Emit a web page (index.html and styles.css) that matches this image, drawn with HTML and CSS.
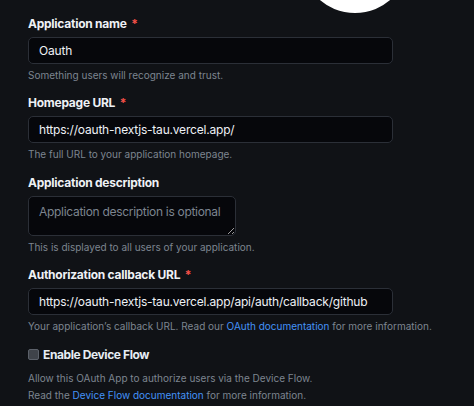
FILE: index.html
```html
<!DOCTYPE html>
<html lang="en">
<head>
<meta charset="utf-8">
<title>Register a new OAuth app</title>
<link rel="stylesheet" href="styles.css">
</head>
<body>
<div class="logo-preview"></div>
<form class="form">
  <div class="field">
    <label class="label" for="name">Application name <span class="req">*</span></label>
    <input class="input input-wide" id="name" type="text" value="Oauth">
    <p class="note">Something users will recognize and trust.</p>
  </div>
  <div class="field">
    <label class="label" for="home">Homepage URL <span class="req">*</span></label>
    <input class="input input-wide" id="home" type="text" value="https://oauth-nextjs-tau.vercel.app/">
    <p class="note">The full URL to your application homepage.</p>
  </div>
  <div class="field">
    <label class="label" for="desc">Application description</label>
    <textarea class="input textarea" id="desc" placeholder="Application description is optional"></textarea>
    <p class="note">This is displayed to all users of your application.</p>
  </div>
  <div class="field">
    <label class="label" for="cb">Authorization callback URL <span class="req">*</span></label>
    <input class="input input-wide" id="cb" type="text" value="https://oauth-nextjs-tau.vercel.app/api/auth/callback/github">
    <p class="note">Your application’s callback URL. Read our <a class="link" href="#">OAuth documentation</a> for more information.</p>
  </div>
  <div class="check-field">
    <label class="check-label"><span class="checkbox"></span>Enable Device Flow</label>
    <p class="note note-first">Allow this OAuth App to authorize users via the Device Flow.</p>
    <p class="note note-second">Read the <a class="link" href="#">Device Flow documentation</a> for more information.</p>
  </div>
</form>
</body>
</html>
```
FILE: styles.css
```css
html, body {
  margin: 0;
  padding: 0;
  background: #101216;
  height: 100%;
  overflow: hidden;
}
body {
  position: relative;
  font-family: Inter, "Noto Sans", "Liberation Sans", sans-serif;
  color: #e6edf3;
}
.logo-preview {
  position: absolute;
  left: 301px;
  top: -95px;
  width: 108px;
  height: 108px;
  border-radius: 50%;
  background: #ffffff;
}
.form {
  padding: 15.5px 0 0 28px;
  margin: 0;
}
.field {
  margin-bottom: 13.5px;
}
.label {
  display: block;
  font-size: 12px;
  line-height: 16px;
  font-weight: 700;
  letter-spacing: -0.25px;
  margin-bottom: 5px;
  color: #eef1f5;
}
.req {
  color: #f85149;
  margin-left: 2px;
}
.input {
  display: block;
  box-sizing: border-box;
  height: 27px;
  margin: 0;
  padding: 0 10px;
  border: 1px solid #2b2f37;
  border-radius: 5px;
  background: #06070b;
  color: #eef1f5;
  font-family: inherit;
  font-size: 12px;
  letter-spacing: -0.2px;
  outline: none;
}
.input-wide {
  width: 365px;
}
.textarea {
  width: 208px;
  height: 40px;
  padding: 7px 4px 7px 10px;
  line-height: 16px;
  letter-spacing: -0.3px;
  resize: vertical;
}
.textarea::placeholder {
  color: #7d8590;
}
.note {
  margin: 4px 0 0;
  font-size: 10px;
  line-height: 14px;
  color: #7d8590;
}
.link {
  color: #4493f8;
  text-decoration: none;
}
.check-label {
  display: flex;
  align-items: center;
  gap: 4px;
  font-size: 12px;
  line-height: 16px;
  font-weight: 700;
  letter-spacing: -0.4px;
}
.checkbox {
  width: 9px;
  height: 9px;
  border: 1px solid #5c616a;
  border-radius: 2px;
  background: #3f434a;
}
.note-first {
  margin-top: 8px;
}
.note-second {
  margin-top: 3.5px;
}
```
